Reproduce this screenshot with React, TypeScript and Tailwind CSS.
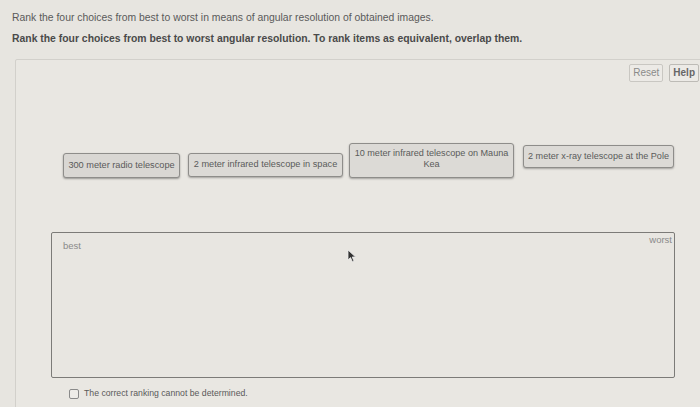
export default function App() {
  const font = { fontFamily: '"Liberation Sans", Arial, sans-serif' }
  return (
    <div className="w-[700px] h-[407px] overflow-hidden bg-[#e7e5e0] text-[#555] relative" style={font}>
      <div className="pl-[12px] pt-[12px]">
        <p className="text-[10.4px] leading-[12px] text-[#5a5a5a]">
          Rank the four choices from best to worst in means of angular resolution of obtained images.
        </p>
        <p className="mt-[8px] text-[10.4px] leading-[13px] font-bold text-[#4a4a4a]">
          Rank the four choices from best to worst angular resolution. To rank items as equivalent, overlap them.
        </p>
      </div>

      <div className="ml-[15px] mt-[14px] w-[700px] h-[350px] border border-[#d2d0cb] rounded-[2px] bg-[#e9e7e2] flex flex-col">
        <div className="flex justify-end gap-[6px] pt-[4px] pr-[15px]">
          <button className="h-[18px] px-[3px] border border-[#c9c7c2] rounded-[2px] bg-[#eceae6] text-[10px] leading-[16px] text-[#8a8a8a]">
            Reset
          </button>
          <button className="h-[18px] px-[3px] border border-[#bdbbb6] rounded-[2px] bg-[#eceae6] text-[10px] leading-[16px] font-bold text-[#666]">
            Help
          </button>
        </div>

        <div className="mt-[61px] ml-[47px] flex items-start">
          <div className="mt-[10px] w-[117px] h-[25px] flex items-center justify-center border border-[#8e8d8a] rounded-[3px] bg-[#d9d7d3] shadow-[0_1px_2px_rgba(0,0,0,0.35)] text-[9.2px] text-[#5a5a5a]">
            300 meter radio telescope
          </div>
          <div className="ml-[8px] mt-[10px] w-[155px] h-[24px] flex items-center justify-center border border-[#8e8d8a] rounded-[3px] bg-[#dcdad6] shadow-[0_1px_2px_rgba(0,0,0,0.3)] text-[9.2px] text-[#5a5a5a]">
            2 meter infrared telescope in space
          </div>
          <div className="ml-[6px] w-[165px] h-[35px] flex items-start justify-center pt-[4px] border border-[#8e8d8a] rounded-[3px] bg-[#dcdad6] shadow-[0_1px_2px_rgba(0,0,0,0.3)] text-[9.1px] leading-[11px] text-[#5a5a5a] text-center">
            10 meter infrared telescope on Mauna
            <br />
            Kea
          </div>
          <div className="ml-[9px] mt-[2px] w-[151px] h-[23px] flex items-center justify-center border border-[#8e8d8a] rounded-[3px] bg-[#dcdad6] shadow-[0_1px_2px_rgba(0,0,0,0.3)] text-[9.1px] text-[#5a5a5a]">
            2 meter x-ray telescope at the Pole
          </div>
        </div>

        <div className="mt-[54px] ml-[35px] w-[624px] h-[146px] border-[1.5px] border-[#7c7b78] rounded-[2px] bg-[#e8e6e1] flex justify-between px-[11px]">
          <span className="mt-[7px] text-[9.5px] leading-[12px] text-[#8a8a8a]">best</span>
          <span className="mt-[1px] -mr-[9px] text-[9.5px] leading-[12px] text-[#8a8a8a]">worst</span>
        </div>

        <label className="mt-[9px] ml-[53px] flex items-center gap-[5px] text-[8.7px] text-[#5a5a5a]">
          <span className="w-[10px] h-[10px] border border-[#8a8a8a] rounded-[2px] bg-[#eeece8]" />
          The correct ranking cannot be determined.
        </label>
      </div>

      <svg className="absolute left-[347px] top-[249px]" width="10" height="14" viewBox="0 0 10 14">
        <path d="M1 1 L1 11 L3.5 8.6 L5.4 12.8 L7 12 L5.2 8 L8.6 8 Z" fill="#333" stroke="#eee" strokeWidth="0.8" />
      </svg>
    </div>
  )
}
